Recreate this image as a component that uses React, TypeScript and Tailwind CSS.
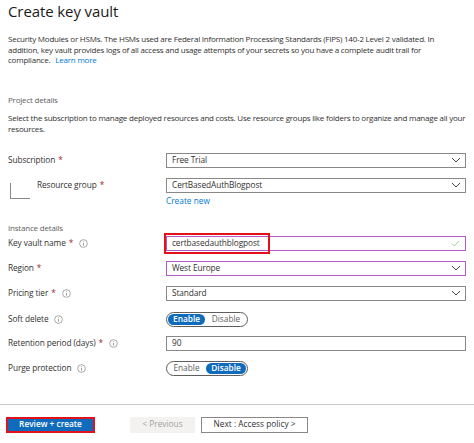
import React from "react"

const font = "font-['Open_Sans','Noto_Sans',sans-serif]"

function Info() {
  return (
    <svg width="9" height="9" viewBox="0 0 10 10" className="ml-[6px] shrink-0">
      <circle cx="5" cy="5" r="4.3" fill="none" stroke="#8a8886" strokeWidth="0.8" />
      <line x1="5" y1="4.3" x2="5" y2="7.4" stroke="#8a8886" strokeWidth="0.9" />
      <circle cx="5" cy="2.9" r="0.55" fill="#8a8886" />
    </svg>
  )
}

function Chevron() {
  return (
    <svg width="10" height="6" viewBox="0 0 10 6" className="ml-auto mr-[4px]">
      <polyline points="1,1 5,5 9,1" fill="none" stroke="#323130" strokeWidth="0.9" />
    </svg>
  )
}

function Label({ text, required, info, indent }: { text: string; required?: boolean; info?: boolean; indent?: boolean }) {
  return (
    <div className={`w-[158px] shrink-0 flex items-center text-[8.3px] tracking-[-0.1px] text-[#323130] ${indent ? "pl-[29px]" : ""}`}>
      <span>{text}</span>
      {required && <span className="text-[#a4262c] ml-[3px]">*</span>}
      {info && <Info />}
    </div>
  )
}

function Box({ value, purple, select, check }: { value: string; purple?: boolean; select?: boolean; check?: boolean }) {
  return (
    <div
      className={`w-[300px] h-[15px] flex items-center pl-[5px] text-[8.3px] tracking-[-0.1px] text-[#323130] bg-white border ${
        purple ? "border-[#b05bc6]" : "border-[#8a8886]"
      }`}
    >
      <span>{value}</span>
      {select && <Chevron />}
      {check && (
        <svg width="9" height="7" viewBox="0 0 9 7" className="ml-auto mr-[5px]">
          <polyline points="1,3.6 3.4,6 8,1" fill="none" stroke="#8fc98f" strokeWidth="0.9" />
        </svg>
      )}
    </div>
  )
}

function Toggle({ on }: { on: boolean }) {
  return (
    <div className="w-[82px] h-[15px] rounded-full border border-[#605e5c] flex items-center px-[1px] text-[8.3px]">
      <span
        className={`h-[11px] w-[37px] rounded-full flex items-center justify-center ${
          on ? "bg-[#0f6cbd] text-white font-semibold" : "text-[#605e5c]"
        }`}
      >
        Enable
      </span>
      <span
        className={`h-[11px] w-[40px] ml-[1px] rounded-full flex items-center justify-center ${
          !on ? "bg-[#0f6cbd] text-white font-semibold" : "text-[#605e5c]"
        }`}
      >
        Disable
      </span>
    </div>
  )
}

export default function App() {
  return (
    <div className={`w-[474px] h-[443px] bg-white overflow-hidden ${font}`}>
      <div className="px-[8px]">
        <h1 className="h-[22px] leading-[22px] text-[15px] tracking-[-0.1px] text-[#1b1a19]">Create key vault</h1>

        <div className="mt-[12px] pr-[10px] text-[8px] tracking-[-0.22px] leading-[10.5px] text-[#323130]">
          <div>Security Modules or HSMs. The HSMs used are Federal Information Processing Standards (FIPS) 140-2 Level 2 validated. In</div>
          <div>addition, key vault provides logs of all access and usage attempts of your secrets so you have a complete audit trail for</div>
          <div className="flex gap-[5px]">
            <span>compliance.</span>
            <span className="text-[#0078d4]">Learn more</span>
          </div>
        </div>

        <div className="mt-[28px] text-[8px] tracking-[-0.2px] leading-[11px] text-[#605e5c]">Project details</div>
        <p className="mt-[7px] text-[8px] tracking-[-0.22px] leading-[11px] text-[#323130]">
          Select the subscription to manage deployed resources and costs. Use resource groups like folders to organize and manage all your resources.
        </p>

        {/* subscription + resource group tree */}
        <div className="relative">
          <div className="mt-[19px] flex items-center h-[15px]">
            <Label text="Subscription" required />
            <Box value="Free Trial" select />
          </div>
          <div className="mt-[10px] flex items-center h-[15px]">
            <Label text="Resource group" required indent />
            <Box value="CertBasedAuthBlogpost" select />
          </div>
          <div className="absolute left-[2px] top-[30px] w-[20px] h-[16px] border-l border-b border-[#8a8886]" />
        </div>
        <div className="mt-[2px] pl-[158px] text-[8.3px] leading-[11px] text-[#0078d4] font-medium">Create new</div>

        <div className="mt-[16px] text-[8px] tracking-[-0.2px] leading-[11px] text-[#605e5c]">Instance details</div>

        <div className="relative mt-[3px] flex items-center h-[15px]">
          <Label text="Key vault name" required info />
          <Box value="certbasedauthblogpost" purple check />
          <div className="absolute left-[156px] top-[-3px] w-[106px] h-[21px] border-2 border-[#e3111c]" />
        </div>
        <div className="mt-[10px] flex items-center h-[15px]">
          <Label text="Region" required />
          <Box value="West Europe" purple select />
        </div>
        <div className="mt-[10px] flex items-center h-[15px]">
          <Label text="Pricing tier" required info />
          <Box value="Standard" select />
        </div>
        <div className="mt-[11px] flex items-center h-[15px]">
          <Label text="Soft delete" info />
          <Toggle on />
        </div>
        <div className="mt-[9px] flex items-center h-[15px]">
          <Label text="Retention period (days)" required info />
          <Box value="90" />
        </div>
        <div className="mt-[10px] flex items-center h-[15px]">
          <Label text="Purge protection" info />
          <Toggle on={false} />
        </div>
      </div>

      <div className="mt-[28px] border-t border-[#c8c6c4]" />

      <div className="mt-[12px] flex items-center pl-[6px] h-[16px]">
        <div className="border-2 border-[#e3111c] h-[16px] w-[89px] flex">
          <div className="flex-1 bg-[#0f6cbd] text-white text-[8.3px] font-semibold flex items-center justify-center">
            Review + create
          </div>
        </div>
        <div className="ml-[35px] w-[65px] h-[16px] bg-[#f3f2f1] text-[#a19f9d] text-[8.3px] flex items-center justify-center">
          &lt; Previous
        </div>
        <div className="ml-[6px] w-[107px] h-[16px] border border-[#8a8886] text-[#323130] text-[8.3px] font-medium flex items-center justify-center">
          Next : Access policy &gt;
        </div>
      </div>
    </div>
  )
}
